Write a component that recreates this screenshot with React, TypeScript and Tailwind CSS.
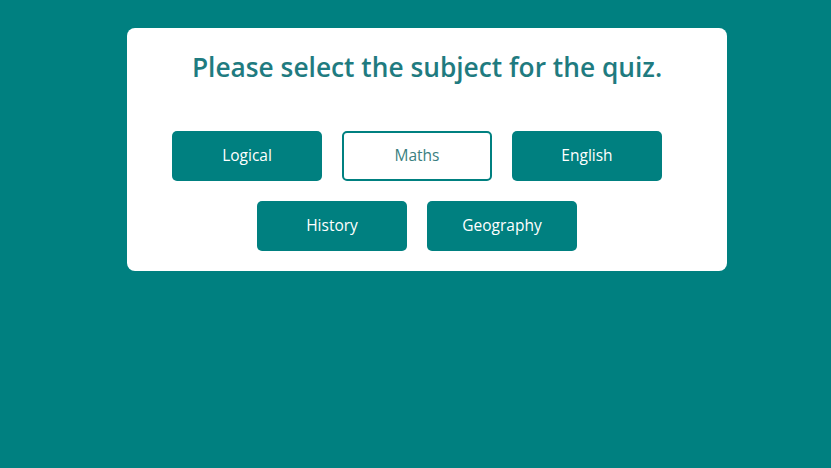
const subjects = ["Logical", "Maths", "English", "History", "Geography"] as const;

const selected = "Maths";

export default function App() {
  return (
    <main className="min-h-screen w-full bg-[#008080] pt-[28px] font-['Open_Sans',sans-serif]">
      <section className="ml-[127px] w-[600px] rounded-lg bg-white pb-[20px]">
        <h1 className="pt-[20px] text-center text-[26.3px] font-semibold leading-[38px] text-[#1f7b80]">
          Please select the subject for the quiz.
        </h1>

        <div className="mt-[45px] flex flex-wrap justify-center gap-y-[20px]">
          {subjects.map((subject) => (
            <button
              key={subject}
              className={
                subject === selected
                  ? "mr-[20px] h-[50px] w-[150px] rounded-[5px] border-2 border-[#008080] bg-white text-[15.5px] text-[#3a7f80]"
                  : "mr-[20px] h-[50px] w-[150px] rounded-[5px] bg-[#008080] text-[15.5px] text-white"
              }
            >
              {subject}
            </button>
          ))}
        </div>
      </section>
    </main>
  );
}
